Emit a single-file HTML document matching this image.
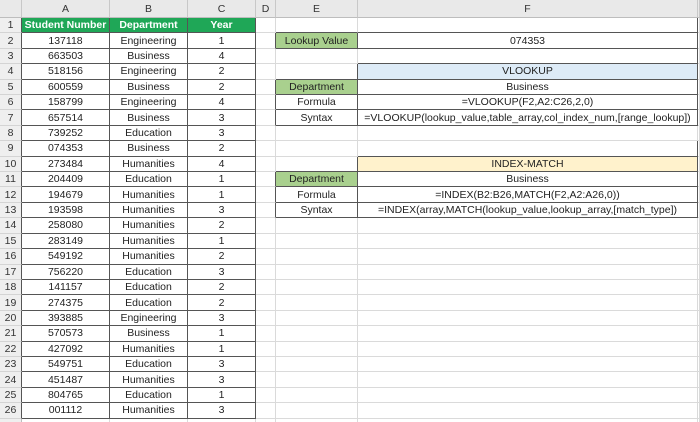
<!DOCTYPE html>
<html><head><meta charset="utf-8"><style>
html,body{margin:0;padding:0;background:#fff;width:700px;height:422px;overflow:hidden}
table{border-collapse:separate;border-spacing:0;table-layout:fixed;font-family:"Liberation Sans",sans-serif;font-size:10.5px;color:#222}
td{border-right:1px solid #dadada;border-bottom:1px solid #dadada;text-align:center;padding:0;height:14.42px;white-space:nowrap;overflow:hidden;line-height:14px}
tr.h td{height:17px;background:#e9e9e9;color:#333;border-right-color:#c8c8c8;border-bottom-color:#bdbdbd}
td.n{background:#efefef;color:#333;border-right-color:#bdbdbd;border-bottom-color:#d4d4d4}
td.r{border-right-color:#555}
td.b{border-bottom-color:#555}
.g{background:#1fa757;color:#fff;font-weight:bold}
.lg{background:#a9d08e}
.bl{background:#ddebf7}
.ye{background:#fff2cc}
</style></head><body>
<table>
<colgroup><col style="width:22px"><col style="width:88px"><col style="width:78px"><col style="width:68px"><col style="width:20px"><col style="width:82px"><col style="width:340px"><col style="width:2px"></colgroup>
<tr class="h"><td></td><td class="b">A</td><td class="b">B</td><td class="b">C</td><td>D</td><td>E</td><td>F</td><td></td></tr>
<tr><td class="n r">1</td><td class="g r b">Student Number</td><td class="g r b">Department</td><td class="g r b">Year</td><td></td><td class="b"></td><td class="b r"></td><td></td></tr>
<tr><td class="n r">2</td><td class="r b">137118</td><td class="r b">Engineering</td><td class="r b">1</td><td class="r"></td><td class="lg r b">Lookup Value</td><td class="r b">074353</td><td></td></tr>
<tr><td class="n r">3</td><td class="r b">663503</td><td class="r b">Business</td><td class="r b">4</td><td></td><td></td><td class="b r"></td><td></td></tr>
<tr><td class="n r">4</td><td class="r b">518156</td><td class="r b">Engineering</td><td class="r b">2</td><td></td><td class="b r"></td><td class="bl r b">VLOOKUP</td><td></td></tr>
<tr><td class="n r">5</td><td class="r b">600559</td><td class="r b">Business</td><td class="r b">2</td><td class="r"></td><td class="lg r b">Department</td><td class="r b">Business</td><td></td></tr>
<tr><td class="n r">6</td><td class="r b">158799</td><td class="r b">Engineering</td><td class="r b">4</td><td class="r"></td><td class="r b">Formula</td><td class="r b">=VLOOKUP(F2,A2:C26,2,0)</td><td></td></tr>
<tr><td class="n r">7</td><td class="r b">657514</td><td class="r b">Business</td><td class="r b">3</td><td class="r"></td><td class="r b">Syntax</td><td class="r b">=VLOOKUP(lookup_value,table_array,col_index_num,[range_lookup])</td><td></td></tr>
<tr><td class="n r">8</td><td class="r b">739252</td><td class="r b">Education</td><td class="r b">3</td><td></td><td></td><td></td><td></td></tr>
<tr><td class="n r">9</td><td class="r b">074353</td><td class="r b">Business</td><td class="r b">2</td><td></td><td></td><td class="b r"></td><td></td></tr>
<tr><td class="n r">10</td><td class="r b">273484</td><td class="r b">Humanities</td><td class="r b">4</td><td></td><td class="b r"></td><td class="ye r b">INDEX-MATCH</td><td></td></tr>
<tr><td class="n r">11</td><td class="r b">204409</td><td class="r b">Education</td><td class="r b">1</td><td class="r"></td><td class="lg r b">Department</td><td class="r b">Business</td><td></td></tr>
<tr><td class="n r">12</td><td class="r b">194679</td><td class="r b">Humanities</td><td class="r b">1</td><td class="r"></td><td class="r b">Formula</td><td class="r b">=INDEX(B2:B26,MATCH(F2,A2:A26,0))</td><td></td></tr>
<tr><td class="n r">13</td><td class="r b">193598</td><td class="r b">Humanities</td><td class="r b">3</td><td class="r"></td><td class="r b">Syntax</td><td class="r b">=INDEX(array,MATCH(lookup_value,lookup_array,[match_type])</td><td></td></tr>
<tr><td class="n r">14</td><td class="r b">258080</td><td class="r b">Humanities</td><td class="r b">2</td><td></td><td></td><td></td><td></td></tr>
<tr><td class="n r">15</td><td class="r b">283149</td><td class="r b">Humanities</td><td class="r b">1</td><td></td><td></td><td></td><td></td></tr>
<tr><td class="n r">16</td><td class="r b">549192</td><td class="r b">Humanities</td><td class="r b">2</td><td></td><td></td><td></td><td></td></tr>
<tr><td class="n r">17</td><td class="r b">756220</td><td class="r b">Education</td><td class="r b">3</td><td></td><td></td><td></td><td></td></tr>
<tr><td class="n r">18</td><td class="r b">141157</td><td class="r b">Education</td><td class="r b">2</td><td></td><td></td><td></td><td></td></tr>
<tr><td class="n r">19</td><td class="r b">274375</td><td class="r b">Education</td><td class="r b">2</td><td></td><td></td><td></td><td></td></tr>
<tr><td class="n r">20</td><td class="r b">393885</td><td class="r b">Engineering</td><td class="r b">3</td><td></td><td></td><td></td><td></td></tr>
<tr><td class="n r">21</td><td class="r b">570573</td><td class="r b">Business</td><td class="r b">1</td><td></td><td></td><td></td><td></td></tr>
<tr><td class="n r">22</td><td class="r b">427092</td><td class="r b">Humanities</td><td class="r b">1</td><td></td><td></td><td></td><td></td></tr>
<tr><td class="n r">23</td><td class="r b">549751</td><td class="r b">Education</td><td class="r b">3</td><td></td><td></td><td></td><td></td></tr>
<tr><td class="n r">24</td><td class="r b">451487</td><td class="r b">Humanities</td><td class="r b">3</td><td></td><td></td><td></td><td></td></tr>
<tr><td class="n r">25</td><td class="r b">804765</td><td class="r b">Education</td><td class="r b">1</td><td></td><td></td><td></td><td></td></tr>
<tr><td class="n r">26</td><td class="r b">001112</td><td class="r b">Humanities</td><td class="r b">3</td><td></td><td></td><td></td><td></td></tr>
<tr><td class="n"></td><td></td><td></td><td></td><td></td><td></td><td></td><td></td></tr>
</table>
</body></html>
